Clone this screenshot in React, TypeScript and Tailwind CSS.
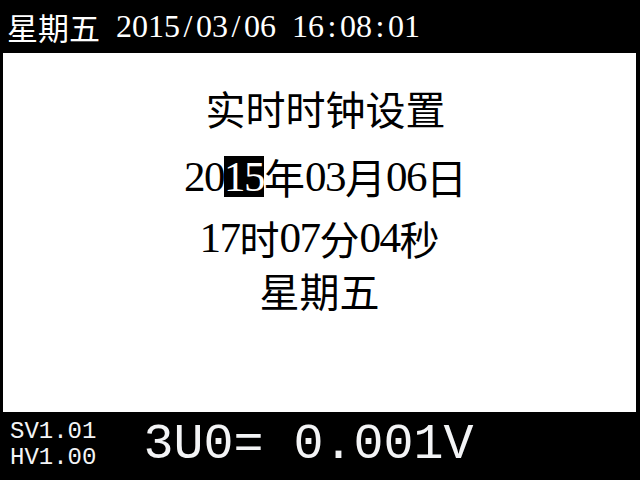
import React from 'react';

const SERIF = '"Liberation Serif", "Noto Sans CJK SC", serif';
const CJK = '"Noto Sans CJK SC", "Noto Sans CJK JP", sans-serif';

// LCD-style text: CJK glyphs take a full cell, ASCII a half cell (SimSun grid)
function Cells({
  text,
  size,
  half = size / 2,
  ascii = size * 1.08,
  hi = [],
}: {
  text: string;
  size: number;
  half?: number;
  ascii?: number;
  hi?: number[];
}) {
  return (
    <div className="flex whitespace-pre" style={{ height: size, lineHeight: `${size}px` }}>
      {Array.from(text).map((ch, i) => {
        const wide = ch.charCodeAt(0) > 0x2e80;
        const inv = hi.includes(i);
        return (
          <span
            key={i}
            className={`block shrink-0 text-center ${inv ? 'bg-black text-white' : ''}`}
            style={{
              width: wide ? size : half,
              fontSize: wide ? size : ascii,
              fontFamily: wide ? CJK : SERIF,
            }}
          >
            {ch}
          </span>
        );
      })}
    </div>
  );
}

export default function App() {
  return (
    <div className="w-[640px] h-[480px] bg-black flex flex-col overflow-hidden">
      {/* status bar */}
      <div className="h-[53px] flex pl-[7px] pt-[11px] text-white">
        <Cells text="星期五 2015/03/06 16:08:01" size={31} half={16} ascii={32} />
      </div>

      {/* settings panel */}
      <div className="ml-[3px] mr-[4px] h-[359px] bg-white text-black flex flex-col items-center">
        <div className="mt-[35px] pl-[12px] flex">
          <Cells text="实时时钟设置" size={40} />
        </div>
        <div className="mt-[28px] pl-[12px] flex">
          <Cells text="2015年03月06日" size={41} half={20} ascii={43} hi={[2, 3]} />
        </div>
        <div className="mt-[21px] flex">
          <Cells text="17时07分04秒" size={40} />
        </div>
        <div className="mt-[12px] flex">
          <Cells text="星期五" size={40} />
        </div>
      </div>

      {/* footer */}
      <div className="flex-1 flex items-start text-gray-100" style={{ fontFamily: '"Liberation Mono", monospace' }}>
        <div className="ml-[10px] mt-[7px] flex flex-col text-[24px] leading-[26px]">
          <span>SV1.01</span>
          <span>HV1.00</span>
        </div>
        <div className="ml-[47px] mt-[8px] text-[50px] leading-[50px] whitespace-pre">3U0= 0.001V</div>
      </div>
    </div>
  );
}
